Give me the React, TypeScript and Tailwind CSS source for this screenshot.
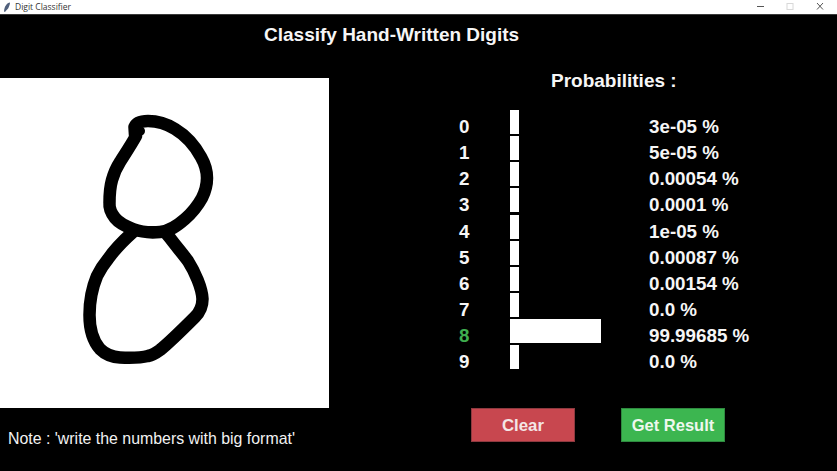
const probabilities = [
  { digit: '0', width: 9, value: '3e-05 %' },
  { digit: '1', width: 9, value: '5e-05 %' },
  { digit: '2', width: 9, value: '0.00054 %' },
  { digit: '3', width: 9, value: '0.0001 %' },
  { digit: '4', width: 9, value: '1e-05 %' },
  { digit: '5', width: 9, value: '0.00087 %' },
  { digit: '6', width: 9, value: '0.00154 %' },
  { digit: '7', width: 9, value: '0.0 %' },
  { digit: '8', width: 91, value: '99.99685 %', best: true },
  { digit: '9', width: 9, value: '0.0 %' },
];

function TitleBar() {
  return (
    <div className="flex h-[15px] items-center justify-between border-b border-[#3a3a3a] bg-white">
      <div className="flex items-center gap-[4px] pl-[3px]">
        <svg width="8" height="11" viewBox="0 0 8 11">
          <path d="M7 0.5C4 1 1.5 4 1 9.5L2 10C3 8 5.5 7 6 4.5C6.6 3 7 2 7 0.5Z" fill="#50607c" />
        </svg>
        <span className="font-['Open_Sans'] text-[8.5px] leading-none text-[#333]">Digit Classifier</span>
      </div>
      <div className="flex items-center">
        <svg width="100" height="14" viewBox="0 0 100 14" fill="none">
          <path d="M20 6.5H27" stroke="#555" strokeWidth="1" />
          <rect x="50" y="3.5" width="6" height="6" stroke="#d8d8d8" strokeWidth="1" />
          <path d="M80 3L86 9.5M86 3L80 9.5" stroke="#555" strokeWidth="1" />
        </svg>
      </div>
    </div>
  );
}

function DrawingCanvas() {
  return (
    <div className="h-[330px] w-[329px] bg-white">
      <svg width="329" height="330" viewBox="0 78 329 330" fill="none" stroke="black" strokeWidth="12.5" strokeLinecap="round" strokeLinejoin="round">
        <path d="M135 135L134.5 127C136 123 141 121 148 121C158 121 167 124 175 129C185 135 195 146 201 157C205 164 207 171 207 178C207 186 205 192 202 198C197 207 192 213 185 219C177 226 170 231 160 232C150 233 141 232 133 229C125 226 119 223 115 218C111 213 109 209 109.5 203C109.5 195 110 187 112 180C114 173 116 168 120 162C125 154 131 145 136 136" />
        <path d="M136 128L140 131" strokeWidth="10" />
        <path d="M133 232C124 240 115 249 108 259C103 265 100 270 97 276C92 288 89.5 300 89.5 315C89.5 328 93 341 100 349C105 354 111 357 120 357.5C130 358 140 358 148 356C153 355 156 353 160 350C170 342 183 329 195 317C200 312 202.5 306 202.5 299C202 288 195 272 188 261C182 253 176 246 170 238L165 232" />
      </svg>
    </div>
  );
}

export default function App() {
  return (
    <div className="flex h-[471px] w-[837px] flex-col overflow-hidden bg-black font-['Liberation_Sans',Arial,sans-serif]">
      <TitleBar />
      <h1 className="h-[63px] pl-[264px] pt-[8px] text-[19px] leading-[24px] font-bold text-[#f6f6f6]">
        Classify Hand-Written Digits
      </h1>
      <div className="flex flex-1">
        <div className="flex w-[459px] flex-col">
          <DrawingCanvas />
          <p className="pl-[8px] pt-[21px] text-[15.9px] leading-[20px] text-[#f2f2f2]">
            Note : 'write the numbers with big format'
          </p>
        </div>
        <div className="flex flex-1 flex-col">
          <h2 className="pl-[92px] text-[19px] leading-[6px] font-bold text-[#f6f6f6]">Probabilities :</h2>
          <div className="mt-[26px] flex flex-col gap-[2.15px]">
            {probabilities.map((row) => (
              <div key={row.digit} className="flex h-[24px] items-start text-[18.8px] leading-[24px] font-bold text-[#f6f6f6]">
                <span className={row.best ? 'w-[51px] pt-[5px] text-[#3fae4f]' : 'w-[51px] pt-[5px]'}>{row.digit}</span>
                <div className="w-[139px]">
                  <div className="h-[24px] bg-white" style={{ width: row.width }} />
                </div>
                <span className="pt-[5px]">{row.value}</span>
              </div>
            ))}
          </div>
          <div className="mt-[39px] flex gap-[46px] pl-[12px]">
            <button className="h-[34px] w-[104px] border border-[#8d3a40] bg-[#c8474f] text-[16.8px] font-bold text-[#f4e6e6]">
              Clear
            </button>
            <button className="h-[34px] w-[104px] border border-[#2f8a40] bg-[#3cb650] text-[16.5px] font-bold text-[#eef8ee]">
              Get Result
            </button>
          </div>
        </div>
      </div>
    </div>
  );
}
